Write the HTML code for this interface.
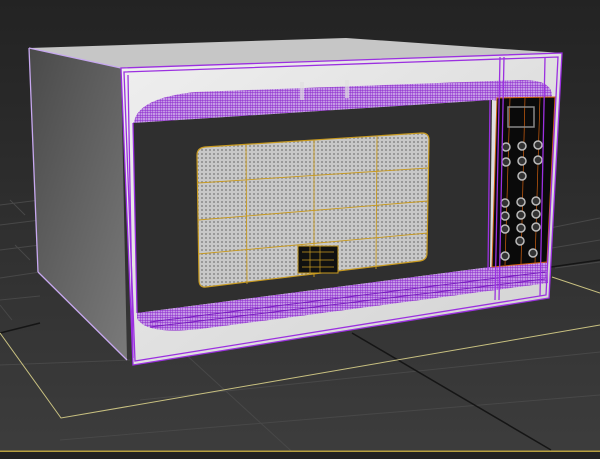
<!DOCTYPE html>
<html><head><style>html,body{margin:0;padding:0;background:#2b2b2b;overflow:hidden}svg{display:block}</style></head>
<body>
<svg width="600" height="459" viewBox="0 0 600 459" xmlns="http://www.w3.org/2000/svg">
<defs>
<linearGradient id="bg" x1="0" y1="0" x2="0" y2="1"><stop offset="0" stop-color="#232323"/><stop offset="0.45" stop-color="#2e2e2e"/><stop offset="1" stop-color="#3d3d3d"/></linearGradient>
<linearGradient id="side" x1="0" y1="0" x2="1" y2="1"><stop offset="0" stop-color="#4a4a4a"/><stop offset="1" stop-color="#7a7a7a"/></linearGradient>
<linearGradient id="front" x1="0" y1="0" x2="1" y2="1"><stop offset="0" stop-color="#efefef"/><stop offset="1" stop-color="#d2d2d2"/></linearGradient>
<pattern id="mesh" width="4" height="4" patternUnits="userSpaceOnUse"><rect width="4" height="4" fill="#c8c8c8"/><circle cx="2" cy="2" r="1" fill="#8a8a8a"/></pattern>
<pattern id="wire" width="2.5" height="2.5" patternUnits="userSpaceOnUse"><rect width="2.5" height="2.5" fill="#c49ae6"/><path d="M0 0V2.5M0 0H2.5" stroke="#8a22cc" stroke-width="0.9"/></pattern>
</defs>
<rect width="600" height="459" fill="url(#bg)"/>
<!-- floor grid -->
<g stroke="#484848" stroke-width="1" fill="none">
<path d="M0 205 L40 200 M0 225 L40 220 M0 250 L40 245 M0 278 L40 272 M0 300 L40 296"/>
<path d="M10 200 L25 215 M15 245 L30 260 M0 305 L12 320"/>
<path d="M550 228 L600 218 M552 248 L600 240 M555 268 L600 262"/>
<path d="M0 365 L130 360 M140 400 L600 352 M60 440 L600 395"/>
<path d="M170 340 L300 459"/>
</g>
<path d="M0 333 L40 323" stroke="#151515" stroke-width="1.5"/>
<path d="M352 333 L551 450" stroke="#151515" stroke-width="1.5"/>
<path d="M551 267 L600 260" stroke="#151515" stroke-width="1.5"/>
<path d="M0 333 L61 418 L600 325 M552 277 L600 293" stroke="#c8c080" stroke-width="1" fill="none"/>
<rect x="0" y="450.5" width="600" height="1.5" fill="#b8a040"/>
<rect x="0" y="452" width="600" height="7" fill="#222"/>
<!-- box -->
<polygon points="29,48 346,38 562,53 121,68" fill="#c6c6c6"/>
<polygon points="29,48 121,68 127,360 38,272" fill="url(#side)"/>
<path d="M29 48 L121 68 M29 48 L38 272 M38 272 L127 360" stroke="#c7a8f0" stroke-width="1.3" fill="none"/>
<polygon points="121,68 562,53 549,298 133,365" fill="url(#front)"/>
<!-- purple top band -->
<path d="M134 122 Q138 98 195 92 L520 80 Q551 79 552 95 L552 106 L492 100 L133 123 Z" fill="url(#wire)"/>
<rect x="300" y="82" width="4" height="18" fill="#e0e0e0" opacity="0.7"/>
<rect x="345" y="80" width="4" height="18" fill="#e0e0e0" opacity="0.7"/>
<!-- window -->
<polygon points="133,123 492,100 490,267 137,313" fill="#2f2f2f"/>
<!-- bottom band -->
<path d="M137 313 L490 267 L547 262 L548 283 L300 316 L200 329 Q145 335 137 318 Z" fill="url(#wire)"/>
<path d="M150 322 L545 272 M150 327 L545 279" stroke="#7a1fc0" stroke-width="1"/>
<!-- glass -->
<path d="M205 147 L422 133 Q429 133 429 140 L427 253 Q427 260 420 261 L206 287 Q199 288 199 280 L197 155 Q197 148 205 147 Z" fill="url(#mesh)" stroke="#c89a20" stroke-width="1.2"/>
<g stroke="#c89a20" stroke-width="0.9" fill="none">
<path d="M246 144 L247 284 M314 140 L314 277 M377 136 L376 269"/>
<path d="M198 183 L428 168 M198 220 L428 201 M198 254 L428 233"/>
</g>
<rect x="298" y="246" width="40" height="27" fill="#111" stroke="#c89a20"/>
<path d="M302 252 H334 M302 260 H334 M302 267 H334 M310 246 V273 M320 246 V273" stroke="#c89a20" stroke-width="0.7"/>
<!-- control panel -->
<polygon points="497,98 555,97 547,262 492,267" fill="#0a0a0a" stroke="#d06010" stroke-width="1"/>
<path d="M510 98 L505 265 M525 97 L521 264 M540 97 L535 263" stroke="#d06010" stroke-width="0.7"/>
<rect x="508" y="107" width="26" height="20" fill="none" stroke="#888" stroke-width="1.5"/>
<g fill="#333" stroke="#bbb" stroke-width="1.5">
<circle cx="506" cy="147" r="4"/><circle cx="522" cy="146" r="4"/><circle cx="538" cy="145" r="4"/>
<circle cx="506" cy="162" r="4"/><circle cx="522" cy="161" r="4"/><circle cx="538" cy="160" r="4"/>
<circle cx="522" cy="176" r="4"/>
<circle cx="505" cy="203" r="4"/><circle cx="521" cy="202" r="4"/><circle cx="536" cy="201" r="4"/>
<circle cx="505" cy="216" r="4"/><circle cx="521" cy="215" r="4"/><circle cx="536" cy="214" r="4"/>
<circle cx="505" cy="229" r="4"/><circle cx="521" cy="228" r="4"/><circle cx="536" cy="227" r="4"/>
<circle cx="520" cy="241" r="4"/>
<circle cx="505" cy="256" r="4"/><circle cx="533" cy="253" r="4"/>
</g>
<!-- frame outlines -->
<g fill="none" stroke="#9b30e0" stroke-width="1.3">
<polygon points="121,68 562,53 549,298 133,365"/>
<polygon points="124,72 558,57 546,295 135,361"/>
<path d="M128 75 L133 358 M545 58 L540 296 M500 57 L495 300 M504 57 L499 300"/>
<path d="M133 123 L137 313 M490 100 L488 270"/>
</g>
</svg>
</body></html>
